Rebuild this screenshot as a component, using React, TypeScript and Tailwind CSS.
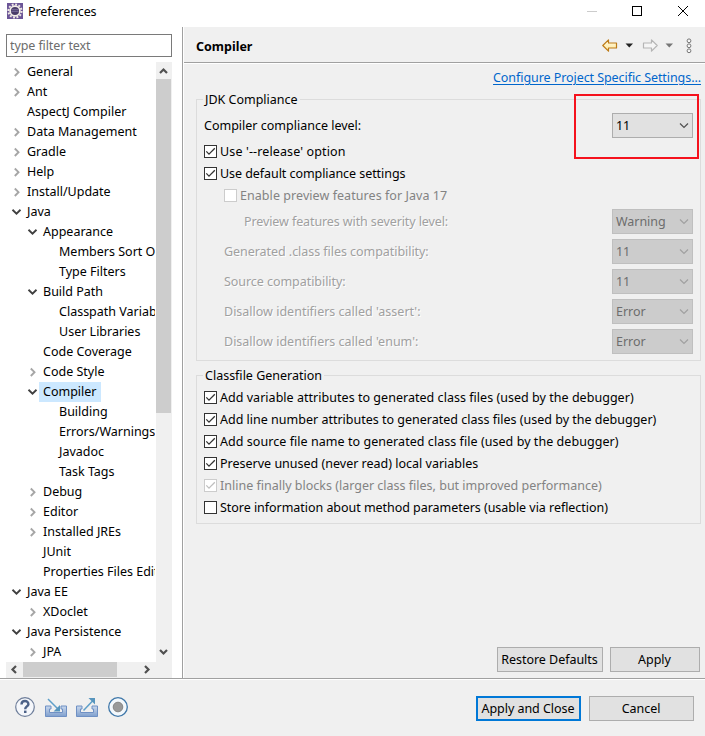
import { useState } from "react";
import type { ReactNode } from "react";
import clsx from "clsx";

type TreeNode = {
  label: string;
  level: 0 | 1 | 2;
  state?: "open" | "closed";
};

const NODES: TreeNode[] = [
  { label: "General", level: 0, state: "closed" },
  { label: "Ant", level: 0, state: "closed" },
  { label: "AspectJ Compiler", level: 0 },
  { label: "Data Management", level: 0, state: "closed" },
  { label: "Gradle", level: 0, state: "closed" },
  { label: "Help", level: 0, state: "closed" },
  { label: "Install/Update", level: 0, state: "closed" },
  { label: "Java", level: 0, state: "open" },
  { label: "Appearance", level: 1, state: "open" },
  { label: "Members Sort Order", level: 2 },
  { label: "Type Filters", level: 2 },
  { label: "Build Path", level: 1, state: "open" },
  { label: "Classpath Variables", level: 2 },
  { label: "User Libraries", level: 2 },
  { label: "Code Coverage", level: 1 },
  { label: "Code Style", level: 1, state: "closed" },
  { label: "Compiler", level: 1, state: "open" },
  { label: "Building", level: 2 },
  { label: "Errors/Warnings", level: 2 },
  { label: "Javadoc", level: 2 },
  { label: "Task Tags", level: 2 },
  { label: "Debug", level: 1, state: "closed" },
  { label: "Editor", level: 1, state: "closed" },
  { label: "Installed JREs", level: 1, state: "closed" },
  { label: "JUnit", level: 1 },
  { label: "Properties Files Editor", level: 1 },
  { label: "Java EE", level: 0, state: "open" },
  { label: "XDoclet", level: 1, state: "closed" },
  { label: "Java Persistence", level: 0, state: "open" },
  { label: "JPA", level: 1, state: "closed" },
];

const INDENT = ["pl-[5px]", "pl-[21px]", "pl-[37px]"];

export default function App() {
  const [selected, setSelected] = useState("Compiler");

  return (
    <div className="relative flex h-[736px] w-[705px] flex-col overflow-hidden bg-[#f0f0f0] font-['Noto_Sans',sans-serif] text-[12.5px] leading-5 text-black">
      <TitleBar />

      <div className="flex h-[651px]">
        {/* Page tree */}
        <div className="flex w-[182px] shrink-0 flex-col bg-white pl-1.5 pt-[7px]">
          <input
            placeholder="type filter text"
            className="h-[23px] w-[166px] shrink-0 border border-[#7a7a7a] px-[3px] tracking-[-0.1px] outline-none placeholder:text-[#6d6d6d]"
          />
          <div className="mt-[5px] flex h-[600px] w-[166px]">
            <ul className="w-[149px] overflow-hidden">
              {NODES.map((node) => (
                <li key={node.label} className={clsx("flex h-5 items-center whitespace-nowrap", INDENT[node.level])}>
                  <TreeArrow state={node.state} />
                  <span
                    onClick={() => setSelected(node.label)}
                    className={clsx("-ml-px h-5 px-1", selected === node.label && "bg-[#cce8ff]")}
                  >
                    {node.label}
                  </span>
                </li>
              ))}
            </ul>
            <div className="ml-px flex w-4 flex-col items-start bg-[#f0f0f0]">
              <ScrollArrow className="h-[17px]" d="M4 10 L7.5 6.5 L11 10" />
              <div className="h-[334px] w-[15px] bg-[#cdcdcd]" />
              <div className="flex-1" />
              <ScrollArrow className="h-[21px]" d="M4 6 L7.5 9.5 L11 6" />
            </div>
          </div>
          <div className="flex h-4 w-[166px] items-start bg-[#f0f0f0]">
            <ScrollArrow className="w-[17px]" d="M9 4 L5.5 7.5 L9 11" />
            <div className="h-[15px] w-[94px] bg-[#cdcdcd]" />
            <ScrollArrow className="ml-[22px] w-[15px]" d="M6 4 L9.5 7.5 L6 11" />
          </div>
        </div>
        <div className="w-0.5 border-l border-[#a0a0a0] bg-white" />

        {/* Page content */}
        <div className="flex min-w-0 flex-1 flex-col">
          <div className="flex h-[36px] shrink-0 items-center border-b border-[#a0a0a0] pl-3 pr-[9px] pt-[3px]">
            <h1 className="flex-1 pt-0.5 font-bold">Compiler</h1>
            <NavIcons />
          </div>
          <div className="flex h-[29px] shrink-0 justify-end border-t border-white pr-1 pt-1">
            <a href="#" className="h-5 tracking-[-0.07px] text-[#0066cc] underline decoration-1 underline-offset-2">
              Configure Project Specific Settings...
            </a>
          </div>

          <Group title="JDK Compliance" className="h-[269px]">
            <div className="mt-[7px] flex h-[25px] items-center justify-between pr-[7px]">
              <span>Compiler compliance level:</span>
              <Combo value="11" />
            </div>
            <div className="mt-[3px]">
              <Check label="Use '--release' option" className="tracking-[0.13px]" checked />
              <Check label="Use default compliance settings" className="tracking-[-0.06px]" checked />
              <div className="pl-5">
                <Check label="Enable preview features for Java 17" className="tracking-[0.06px]" disabled />
              </div>
            </div>
            <div className="mt-0.5 flex flex-col gap-[5px]">
              <SettingRow label="Preview features with severity level:" value="Warning" className="pl-10 tracking-[-0.1px]" />
              <SettingRow label="Generated .class files compatibility:" value="11" className="pl-5 tracking-[-0.05px]" />
              <SettingRow label="Source compatibility:" value="11" className="pl-5 tracking-[-0.05px]" />
              <SettingRow label="Disallow identifiers called 'assert':" value="Error" className="pl-5" />
              <SettingRow label="Disallow identifiers called 'enum':" value="Error" className="pl-5" />
            </div>
          </Group>

          <Group title="Classfile Generation" className="mt-[7px] h-[156px]">
            <div className="mt-[5px]">
              <Check
                label="Add variable attributes to generated class files (used by the debugger)"
                className="tracking-[0.03px]"
                checked
              />
              <Check label="Add line number attributes to generated class files (used by the debugger)" checked />
              <Check
                label="Add source file name to generated class file (used by the debugger)"
                className="tracking-[0.05px]"
                checked
              />
              <Check label="Preserve unused (never read) local variables" checked />
              <Check label="Inline finally blocks (larger class files, but improved performance)" checked disabled />
              <Check
                label="Store information about method parameters (usable via reflection)"
                className="tracking-[-0.04px]"
              />
            </div>
          </Group>

          <div className="mt-auto flex justify-end gap-[7px] pb-[6px] pr-[5px]">
            <Button className="w-[106px]">Restore Defaults</Button>
            <Button className="w-[90px]">Apply</Button>
          </div>
        </div>
      </div>

      {/* Dialog footer */}
      <div className="flex flex-1 items-start border-t border-[#a0a0a0]">
        <div className="flex w-full items-start border-t border-white pl-[14px] pr-[11px] pt-4">
          <FooterIcons />
          <div className="ml-auto flex gap-2">
            <Button className="w-[105px]" primary>
              Apply and Close
            </Button>
            <Button className="w-[105px]">Cancel</Button>
          </div>
        </div>
      </div>

      {/* Highlight around the compliance level */}
      <div className="pointer-events-none absolute left-[574px] top-[94px] h-[65px] w-[125px] border-2 border-[#f5121d]" />
    </div>
  );
}

function TitleBar() {
  return (
    <div className="flex h-[27px] shrink-0 items-start bg-white pl-[7px]">
      <svg width="16" height="16" viewBox="0 0 16 16" className="mt-[3px]">
        <rect width="16" height="16" fill="#6b5597" />
        <circle cx="8" cy="8" r="6.6" fill="none" stroke="#efe9e4" strokeWidth="2" strokeDasharray="1.9 1.55" />
        <circle cx="8" cy="8" r="4.9" fill="#4a3c69" stroke="#f4efe8" strokeWidth="1.7" />
        <path d="M4.6 6.7h6.8M4.3 8.4h7.4" stroke="#8175a5" strokeWidth=".8" />
      </svg>
      <span className="ml-[5px] mt-[2px] tracking-[-0.1px]">Preferences</span>
      <svg width="118" height="22" viewBox="0 0 118 22" fill="none" className="ml-auto" shapeRendering="crispEdges">
        <path d="M0 11.5h10" stroke="#ccc" />
        <rect x="45.5" y="6.5" width="9" height="9" stroke="#000" />
        <path d="M91 6l10 10M101 6l-10 10" stroke="#000" shapeRendering="auto" />
      </svg>
    </div>
  );
}

function NavIcons() {
  return (
    <svg width="94" height="20" viewBox="0 0 94 20" fill="none">
      <defs>
        <linearGradient id="back" x1="0" y1="0" x2="0" y2="1">
          <stop offset="0" stopColor="#fffbe0" />
          <stop offset="1" stopColor="#ffe79d" />
        </linearGradient>
      </defs>
      <path
        d="M.8 9.500 L6.500 3.800 V7 H14.500 V12 H6.500 V15.200 Z"
        fill="url(#back)"
        stroke="#bd7b18"
        strokeWidth="1.200"
        strokeLinejoin="round"
      />
      <path d="M23.500 7.500h7.500l-3.750 4z" fill="#222" />
      <path
        d="M55.200 9.500 L49.500 3.800 V7 H41.500 V12 H49.500 V15.200 Z"
        fill="#f5f5f5"
        stroke="#b5b5b5"
        strokeWidth="1.200"
        strokeLinejoin="round"
      />
      <path d="M63.500 7.500h7.500l-3.750 4z" fill="#777" />
      <g stroke="#777" fill="#f7f7f7">
        <circle cx="87" cy="4.800" r="1.900" />
        <circle cx="87" cy="9.800" r="1.900" />
        <circle cx="87" cy="14.800" r="1.900" />
      </g>
    </svg>
  );
}

function TreeArrow({ state }: { state?: "open" | "closed" }) {
  return (
    <svg width="13" height="12" viewBox="0 0 13 12" fill="none" strokeWidth="1.900" className="shrink-0">
      {state === "closed" && <path d="M3.800 2.500 L7.500 6.200 L3.800 10" stroke="#a6a6a6" />}
      {state === "open" && <path d="M1.500 3.800 L5.500 7.600 L9.500 3.800" stroke="#404040" />}
    </svg>
  );
}

function ScrollArrow({ d, className }: { d: string; className?: string }) {
  return (
    <span className={clsx("flex shrink-0 items-center justify-center", className)}>
      <svg width="15" height="15" viewBox="0 0 15 15" fill="none">
        <path d={d} stroke="#505050" strokeWidth="2.200" />
      </svg>
    </span>
  );
}

function Group({ title, className, children }: { title: string; className?: string; children: ReactNode }) {
  return (
    <section className={clsx("ml-3 mr-1 flex shrink-0 flex-col", className)}>
      {/* The title sits in a gap of the top edge */}
      <div className="flex h-[15px] items-center">
        <span className="h-px w-[7px] bg-[#dcdcdc]" />
        <h2 className="px-0.5 pt-px">{title}</h2>
        <span className="h-px flex-1 bg-[#dcdcdc]" />
      </div>
      <div className="-mt-[7px] flex-1 border border-t-0 border-[#dcdcdc] pl-[7px] pt-[6px]">{children}</div>
    </section>
  );
}

function Combo({ value, disabled }: { value: string; disabled?: boolean }) {
  return (
    <div
      className={clsx(
        "flex h-[25px] w-[81px] shrink-0 items-center justify-between border pl-[3px] pr-[3px] tracking-[-0.05px]",
        disabled ? "border-[#bfbfbf] bg-[#cccccc] text-[#6d6d6d]" : "border-[#adadad] bg-[#e1e1e1]"
      )}
    >
      <span>{value}</span>
      <svg width="11" height="11" viewBox="0 0 11 11" fill="none">
        <path d="M2 3.500 L6 7.500 L10 3.500" stroke={disabled ? "#a0a0a0" : "#505050"} strokeWidth="1.200" />
      </svg>
    </div>
  );
}

function SettingRow({ label, value, className }: { label: string; value: string; className?: string }) {
  return (
    <div className={clsx("flex h-[25px] items-center justify-between pr-[7px]", className)}>
      <span className="text-[#a0a0a0] [text-shadow:1px_1px_0_#fff]">{label}</span>
      <Combo value={value} disabled />
    </div>
  );
}

type CheckProps = { label: string; checked?: boolean; disabled?: boolean; className?: string };

function Check({ label, checked, disabled, className }: CheckProps) {
  return (
    <div
      className={clsx("flex h-[22px] items-center gap-[3px] whitespace-nowrap", disabled && "text-[#838383]", className)}
    >
      <svg width="13" height="13" viewBox="0 0 13 13" fill="none" className="-mt-px shrink-0">
        <rect x=".5" y=".5" width="12" height="12" fill="#fff" stroke={disabled ? "#cccccc" : "#333333"} />
        {checked && <path d="M2.300 6.400 L5 9.100 L10.800 3.300" stroke={disabled ? "#bfbfbf" : "#333"} strokeWidth="1.300" />}
      </svg>
      <span>{label}</span>
    </div>
  );
}

function Button({ children, className, primary }: { children: ReactNode; className?: string; primary?: boolean }) {
  return (
    <button
      className={clsx(
        "flex h-[25px] items-center justify-center whitespace-nowrap bg-[#e1e1e1] pr-px tracking-[-0.04px]",
        primary ? "border-2 border-[#0078d7]" : "border border-[#adadad]",
        className
      )}
    >
      {children}
    </button>
  );
}

function FooterIcons() {
  return (
    <svg width="118" height="24" viewBox="0 0 118 24" fill="none">
      <defs>
        <linearGradient id="tray" x1="0" y1="0" x2="0" y2="1">
          <stop offset="0" stopColor="#c9d8ed" />
          <stop offset="1" stopColor="#7f9fcd" />
        </linearGradient>
      </defs>
      {/* Help */}
      <circle cx="11" cy="11" r="9.300" fill="#f5f7fb" stroke="#6f7f9b" strokeWidth="1.200" />
      <path d="M7.500 8.600 C7.500 3.800 14.600 4 14.400 8.300 C14.200 10.400 11.200 10.600 11.200 13.200" stroke="#4d6288" strokeWidth="2.400" />
      <rect x="10" y="14.600" width="2.500" height="2.400" fill="#4d6288" />
      {/* Import */}
      <path d="M31.500 10H37V13H35.500V16.500H48.500V13H47V10H52.500V20.500H31.500Z" fill="url(#tray)" stroke="#6f90c4" />
      <path d="M34 3 L44 13" stroke="#5e9fc9" strokeWidth="1.500" />
      <path d="M46 15.500v-6.500l-6.500 6.500z" fill="#5795bd" />
      {/* Export */}
      <path d="M62.500 10H68V13H66.500V16.500H79.500V13H78V10H83.500V20.500H62.500Z" fill="url(#tray)" stroke="#6f90c4" />
      <path d="M69.500 14.500 L79 4.500" stroke="#5e9fc9" strokeWidth="1.500" />
      <path d="M81 2v6.500l-6.500-6.500z" fill="#5795bd" />
      {/* Record */}
      <circle cx="104" cy="11" r="9.300" fill="#f3f8fc" stroke="#3f77a9" strokeWidth="1.300" />
      <circle cx="104" cy="11" r="4.800" fill="#999" stroke="#858585" />
    </svg>
  );
}
